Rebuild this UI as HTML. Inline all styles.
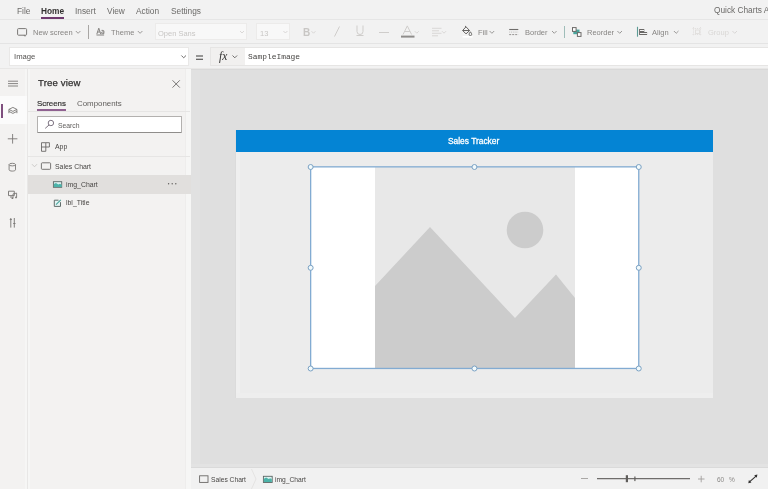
<!DOCTYPE html>
<html><head><meta charset="utf-8">
<style>
*{box-sizing:border-box;margin:0;padding:0}
html,body{width:768px;height:489px;overflow:hidden;background:#f2f2f2;font-family:"Liberation Sans",sans-serif;color:#323130;position:relative}
.a{position:absolute}
.t{position:absolute;white-space:nowrap;line-height:1;will-change:transform}
svg{position:absolute;overflow:visible}
.m{font-size:8.3px;color:#6b6a68;top:7px}
.tb{font-size:7.5px;color:#878583;top:29px}
.dis{color:#c8c6c4}
.tr{font-size:6.9px;color:#484644}
</style></head><body>
<!-- ===== menu bar ===== -->
<div class="a" style="left:0;top:19px;width:768px;height:1px;background:#e6e6e6"></div>
<div class="t m" style="left:17px">File</div>
<div class="t m" style="left:41px;font-weight:bold;color:#323130">Home</div>
<div class="a" style="left:41px;top:17px;width:23px;height:2px;background:#6e3a6e"></div>
<div class="t m" style="left:75px">Insert</div>
<div class="t m" style="left:107px">View</div>
<div class="t m" style="left:136px">Action</div>
<div class="t m" style="left:171px">Settings</div>
<div class="t m" style="left:714px;top:5.6px">Quick Charts App</div>

<!-- ===== toolbar ===== -->
<div class="a" style="left:0;top:43px;width:768px;height:1px;background:#e4e4e4"></div>
<div class="t tb" style="left:33px">New screen</div>
<div class="t tb" style="left:111px">Theme</div>
<div class="a" style="left:155px;top:23px;width:92px;height:17px;background:#f8f8f8;border:1px solid #ecebea"></div>
<div class="t tb dis" style="left:158px;top:30px">Open Sans</div>
<div class="a" style="left:256px;top:23px;width:34px;height:17px;background:#f8f8f8;border:1px solid #ecebea"></div>
<div class="t tb dis" style="left:260px;top:30px">13</div>
<div class="t" style="left:303px;top:27.5px;font-size:10px;font-weight:bold;color:#c8c6c4">B</div>
<div class="t tb" style="left:478px">Fill</div>
<div class="t tb" style="left:525px">Border</div>
<div class="t tb" style="left:587px">Reorder</div>
<div class="t tb" style="left:652px">Align</div>
<div class="t tb" style="left:708px;color:#d9d7d5">Group</div>

<!-- ===== formula bar ===== -->
<div class="a" style="left:9px;top:47px;width:180px;height:19px;background:#fff;border:1px solid #e9e8e7"></div>
<div class="t" style="left:14px;top:53px;font-size:7.7px;color:#53514f">Image</div>
<div class="a" style="left:210px;top:47px;width:36px;height:19px;background:#f1f0ef;border:1px solid #e6e5e4;border-right:none"></div>
<div class="t" style="left:219px;top:50.5px;font-size:11.5px;font-style:italic;font-family:'Liberation Serif',serif;color:#323130">fx</div>
<div class="a" style="left:245px;top:47px;width:523px;height:19px;background:#fff;border-top:1px solid #e6e5e4;border-bottom:1px solid #e6e5e4"></div>
<div class="t" style="left:248px;top:53px;font-size:7.9px;font-family:'Liberation Mono',monospace;color:#484644">SampleImage</div>
<div class="a" style="left:0;top:68px;width:768px;height:1px;background:#e8e7e6"></div>

<!-- ===== left rail ===== -->
<div class="a" style="left:0;top:69px;width:191px;height:420px;background:#f3f2f1"></div>
<div class="a" style="left:25px;top:69px;width:5px;height:420px;background:#f6f6f5"></div>
<div class="a" style="left:27px;top:69px;width:1px;height:420px;background:#e8e7e6"></div>
<div class="a" style="left:0;top:96px;width:27px;height:28px;background:#fbfbfb"></div>
<div class="a" style="left:1px;top:104px;width:2px;height:14px;background:#7f4f7e"></div>

<!-- ===== tree panel ===== -->
<div class="a" style="left:185px;top:69px;width:6px;height:420px;background:#f6f6f5;border-left:1px solid #eeedec"></div>
<div class="t" style="left:37.5px;top:78.3px;font-size:9.6px;letter-spacing:0.15px;color:#323130;-webkit-text-stroke:0.25px #323130">Tree view</div>
<div class="t" style="left:37px;top:99.5px;font-size:7.9px;color:#323130;-webkit-text-stroke:0.2px #323130">Screens</div>
<div class="a" style="left:37px;top:109px;width:29px;height:2px;background:#8f6190"></div>
<div class="t" style="left:77px;top:100px;font-size:7.9px;color:#605e5c">Components</div>
<div class="a" style="left:28px;top:111px;width:162px;height:1px;background:#e6e5e4"></div>
<div class="a" style="left:37px;top:116px;width:145px;height:17px;background:#fff;border:1px solid #b3b1af;border-bottom-color:#8f8d8b;border-radius:1px"></div>
<div class="t" style="left:58px;top:122.5px;font-size:6.8px;color:#605e5c">Search</div>
<div class="t tr" style="left:55px;top:144px">App</div>
<div class="a" style="left:28px;top:156px;width:162px;height:1px;background:#e6e5e4"></div>
<div class="t tr" style="left:55px;top:164px">Sales Chart</div>
<div class="a" style="left:28px;top:175px;width:163px;height:19px;background:#e1dfdd"></div>
<div class="t tr" style="left:66px;top:182px">img_Chart</div>
<div class="t tr" style="left:66px;top:200px">lbl_Title</div>

<!-- ===== canvas ===== -->
<div class="a" style="left:191px;top:69px;width:577px;height:399px;background:#dfdfdf;border-top:1px solid #d9d9d9"></div>
<div class="a" style="left:191px;top:70px;width:9px;height:394px;background:#e1e1e1"></div>
<div class="a" style="left:235px;top:130px;width:1px;height:268px;background:#dbdbdb"></div>
<div class="a" style="left:236px;top:130px;width:477px;height:268px;background:#ececec"></div>
<div class="a" style="left:236px;top:152px;width:4px;height:246px;background:#efefef"></div>
<div class="a" style="left:236px;top:393px;width:477px;height:5px;background:#eeeeee"></div>
<div class="a" style="left:236px;top:130px;width:477px;height:22px;background:#0484d4"></div>
<div class="t" style="left:448px;top:136.5px;font-size:8.4px;color:#fff;-webkit-text-stroke:0.3px #fff">Sales Tracker</div>
<div class="a" style="left:311px;top:167px;width:328px;height:202px;background:#fff"></div>
<div class="a" style="left:374.5px;top:167px;width:200.5px;height:201px;background:#e8e8e8"></div>

<!-- ===== status bar ===== -->
<div class="a" style="left:191px;top:464px;width:577px;height:3px;background:#e3e3e3"></div>
<div class="a" style="left:191px;top:467px;width:577px;height:1px;background:#dadada"></div>
<div class="a" style="left:191px;top:468px;width:577px;height:21px;background:#f1f1f1"></div>
<div class="t" style="left:211px;top:477px;font-size:6.7px;color:#484644">Sales Chart</div>
<div class="t" style="left:275px;top:477px;font-size:6.7px;color:#484644">img_Chart</div>
<div class="t" style="left:717px;top:477px;font-size:6.5px;color:#8a8886">60</div>
<div class="t" style="left:729px;top:477px;font-size:6.5px;color:#8a8886">%</div>

<!-- ===== icons overlay (page coordinates) ===== -->
<svg width="768" height="489" style="left:0;top:0" viewBox="0 0 768 489">
<g fill="none" stroke-width="1">
<!-- chevrons -->
<g stroke="#918f8d" stroke-width="0.9">
<path d="M75.8 31l2.3 2.3 2.3-2.3"/>
<path d="M137.8 31l2.3 2.3 2.3-2.3"/>
<path d="M489.6 31l2.3 2.3 2.3-2.3"/>
<path d="M552 31l2.3 2.3 2.3-2.3"/>
<path d="M617.4 31l2.3 2.3 2.3-2.3"/>
<path d="M673.9 31l2.3 2.3 2.3-2.3"/>
</g>
<g stroke="#d6d4d2" stroke-width="0.9">
<path d="M240 31l2 2 2-2"/>
<path d="M283.4 31l2 2 2-2"/>
<path d="M311.5 31.2l2 2 2-2"/>
<path d="M414.8 31.2l2 2 2-2"/>
<path d="M442 31.2l2 2 2-2"/>
<path d="M732.4 31l2.3 2.3 2.3-2.3"/>
</g>
<!-- new screen -->
<path d="M18.5 28.6h7.2a0.9 0.9 0 0 1 0.9 0.9v4.8a0.9 0.9 0 0 1-0.9 0.9h-7.2a0.9 0.9 0 0 1-0.9-0.9v-4.8a0.9 0.9 0 0 1 0.9-0.9z M24.2 35.2v0.6h1.6" stroke="#7a7876"/>
<rect x="88" y="25" width="1" height="14" fill="#a8a6a4" stroke="none"/>
<!-- theme Aa -->
<path d="M96.8 34.2l2-6 2 6M97.6 32h2.4" stroke="#797775" stroke-width="0.9"/>
<path d="M101.5 30.4h1.6a0.8 0.8 0 0 1 0.8 0.8v2.4h-1.6a0.8 0.8 0 0 1 0-1.6h1.6" stroke="#797775" stroke-width="0.9"/>
<path d="M96.5 35h7.6" stroke="#797775" stroke-width="0.9"/>
<!-- I U S A -->
<path d="M339.5 26.5l-5 10" stroke="#cfcdcb"/>
<path d="M357 25.5v6a3 3 0 0 0 6 0v-6M356.5 35.5h7" stroke="#cfcdcb"/>
<path d="M379 32.5h10" stroke="#cfcdcb"/>
<path d="M403 34.5l4.3-8.6 4.3 8.6M404.6 31.5h5.4" stroke="#cfcdcb"/>
<rect x="401" y="35.6" width="13.5" height="2" fill="#8f8d8b" stroke="none"/>
<!-- align text -->
<path d="M432 28.3h9.5M432 30.8h7M432 33.3h9.5M432 35.8h6" stroke="#d6d4d2" stroke-width="0.9"/>
<!-- fill bucket -->
<path d="M466 26.8l3.6 3.8-3.6 3.3-3.4-3.4z M462.8 30.5h6.6 M465 26l1 0.8" stroke="#5f5d5b" stroke-width="0.95"/>
<path d="M470.4 31.8c0.9 1.2 1.3 1.9 1.3 2.5a1.3 1.3 0 0 1-2.6 0c0-0.6 0.4-1.3 1.3-2.5z" stroke="#5f5d5b" stroke-width="0.9"/>
<rect x="462.5" y="36" width="10" height="1.6" fill="#ffffff" stroke="none"/>
<!-- border -->
<path d="M509.2 29.5h9.1" stroke="#6f6d6b" stroke-width="1.1"/>
<path d="M509.2 32.1h9.1" stroke="#b6b4b2" stroke-width="0.8" stroke-dasharray="1 0.8"/>
<path d="M509.2 34.6h9.1" stroke="#8a8886" stroke-width="0.9" stroke-dasharray="2 1"/>
<rect x="564" y="26" width="1" height="12" fill="#9fbdb9" stroke="none"/>
<!-- reorder -->
<rect x="573.3" y="29.6" width="6.2" height="4.6" fill="#4aa59d" stroke="none"/>
<rect x="572.5" y="27.6" width="3.6" height="3.8" fill="#fff" stroke="#6a6866"/>
<rect x="577.4" y="32.6" width="3.6" height="3.8" fill="#fff" stroke="#6a6866"/>
<!-- align -->
<path d="M637.5 26.8v9.9" stroke="#5d9c96" stroke-width="1.1"/>
<rect x="639.6" y="29.5" width="4.2" height="2" stroke="#6a6866"/>
<rect x="639.6" y="32.5" width="7" height="2" stroke="#6a6866"/>
<!-- group -->
<g stroke="#e0dedc" stroke-width="0.9">
<path d="M692.5 28.5h9M692.5 34.5h9M693.5 27v9M700.5 27v9" stroke-dasharray="1.3 0.9"/>
<rect x="695.5" y="30" width="4" height="3.5"/>
</g>
<!-- formula chevrons -->
<path d="M181.4 55.5l2.3 2.3 2.3-2.3" stroke="#605e5c" stroke-width="0.9"/>
<path d="M232.5 55.5l2.3 2.3 2.3-2.3" stroke="#605e5c" stroke-width="0.9"/>
<path d="M196 56h7M196 59.3h7" stroke="#3b3a39" stroke-width="1.1"/>
<!-- rail -->
<path d="M8 81.2h10M8 83.6h10M8 86h10" stroke="#7a7876" stroke-width="0.9"/>
<path d="M12.9 107.4l4 2-4 2-4-2z M8.9 111.4l4 2 4-2 M8.9 109.4v3.8M16.9 109.4v3.8" stroke="#7a7876" stroke-width="0.9"/>
<path d="M12.6 134v9.6M7.8 138.8h9.6" stroke="#7a7876" stroke-width="0.9"/>
<ellipse cx="12.3" cy="164.6" rx="3.2" ry="1.3" stroke="#7a7876" stroke-width="0.9"/>
<path d="M9.1 164.6v5.2c0 0.7 1.4 1.3 3.2 1.3s3.2-0.6 3.2-1.3v-5.2" stroke="#7a7876" stroke-width="0.9"/>
<path d="M8.5 191.2h5.8v4.4h-5.8z M10 197h2" stroke="#7a7876" stroke-width="0.95"/>
<path d="M13 198.2v-4.3l3.6-0.8v4.3" stroke="#7a7876" stroke-width="0.9"/>
<circle cx="12.4" cy="198.2" r="0.9" fill="#7a7876" stroke="none"/>
<circle cx="16" cy="197.4" r="0.9" fill="#7a7876" stroke="none"/>
<path d="M10.8 218v9.6M14.3 218v9.6M13.2 223.5h2.3M9.8 219.5h2" stroke="#7a7876" stroke-width="0.95"/>
<!-- tree panel -->
<path d="M172.5 80.3l7.3 7.3M179.8 80.3l-7.3 7.3" stroke="#6a6866" stroke-width="0.9"/>
<circle cx="50.9" cy="123" r="2.7" stroke="#6f6474" stroke-width="0.9"/>
<path d="M49 125l-3.8 3.4" stroke="#6f6474" stroke-width="0.9"/>
<path d="M41.5 142.7h4.3v8.6h-4.3z M41.5 147h4.3 M45.8 142.7h3.6v4.3h-3.6" stroke="#6a6866" stroke-width="0.9"/>
<path d="M32 164.2l2.5 2.6 2.5-2.6" stroke="#c8c6c4" stroke-width="0.9"/>
<rect x="41.4" y="162.8" width="9.2" height="6.5" rx="0.8" stroke="#6a6866" stroke-width="0.9"/>
<!-- img icon tree -->
<rect x="53.4" y="181.7" width="8.3" height="5.6" fill="#ddf3f1" stroke="#5a6664" stroke-width="0.9"/>
<path d="M53.9 187v-3l2-1 2.5 1.5 1.5-0.8 1.8 1v2.3z" fill="#4cb3a9" stroke="none"/>
<circle cx="168.6" cy="183.8" r="0.7" fill="#605e5c" stroke="none"/>
<circle cx="172.2" cy="183.8" r="0.7" fill="#605e5c" stroke="none"/>
<circle cx="175.8" cy="183.8" r="0.7" fill="#605e5c" stroke="none"/>
<!-- lbl icon -->
<path d="M58.5 200.2h-4.2v6.2h6.2v-4.2" fill="#e4f4f3" stroke="#5a6664" stroke-width="0.95"/>
<path d="M56 204.7l4.8-4.8" stroke="#4aa59d" stroke-width="1.1"/>
<!-- status bar -->
<rect x="199.6" y="475.8" width="8.4" height="6.6" stroke="#6a6866" stroke-width="0.9"/>
<path d="M251.5 469l4.5 10-4.5 10" stroke="#e4e3e2" stroke-width="1"/>
<rect x="263.4" y="476.3" width="8.8" height="6.2" fill="#ddf3f1" stroke="#5a6664" stroke-width="0.9"/>
<path d="M263.9 482v-3.2l2.2-1.3 2.6 1.6 1.5-0.8 1.6 1v2.7z" fill="#4cb3a9" stroke="none"/>
<path d="M581 478.5h7" stroke="#a19f9d" stroke-width="0.9"/>
<path d="M597 478.7h93" stroke="#6f6d6b" stroke-width="1.3"/>
<rect x="625.8" y="475.2" width="2.2" height="7" fill="#5f5d5b" stroke="none"/>
<rect x="634.3" y="476.5" width="1.2" height="4.6" fill="#5f5d5b" stroke="none"/>
<path d="M701.2 475.8v6.5M698 479h6.5" stroke="#a19f9d" stroke-width="0.9"/>
<path d="M749.5 481.8l6.8-6" stroke="#323130" stroke-width="1.1"/><path d="M748.3 483.2l0.6-3.2 2.6 2.6z M757.4 474.6l-3.2 0.6 2.6 2.6z" fill="#323130" stroke="none"/>
</g>
<!-- placeholder image -->
<path d="M375 286L430 227L515 318L556 274.5L575 298V368H375z" fill="#cccccc"/>
<circle cx="525" cy="230" r="18.3" fill="#cccccc"/>
<!-- selection border -->
<g fill="#82abd2" stroke="none"><rect x="310" y="166.2" width="329.4" height="1.3"/><rect x="310" y="367.8" width="329.4" height="1.3"/><rect x="310" y="166.2" width="1.3" height="202.9"/><rect x="638.1" y="166.2" width="1.3" height="202.9"/></g>
<!-- handles -->
<g fill="#f2fafc" stroke="#79a0c2" stroke-width="1">
<circle cx="310.65" cy="167" r="2.5"/><circle cx="474.45" cy="167" r="2.5"/><circle cx="638.75" cy="167" r="2.5"/>
<circle cx="310.65" cy="267.8" r="2.5"/><circle cx="638.75" cy="267.8" r="2.5"/>
<circle cx="310.65" cy="368.5" r="2.5"/><circle cx="474.45" cy="368.5" r="2.5"/><circle cx="638.75" cy="368.5" r="2.5"/>
</g>
</svg>
</body></html>
